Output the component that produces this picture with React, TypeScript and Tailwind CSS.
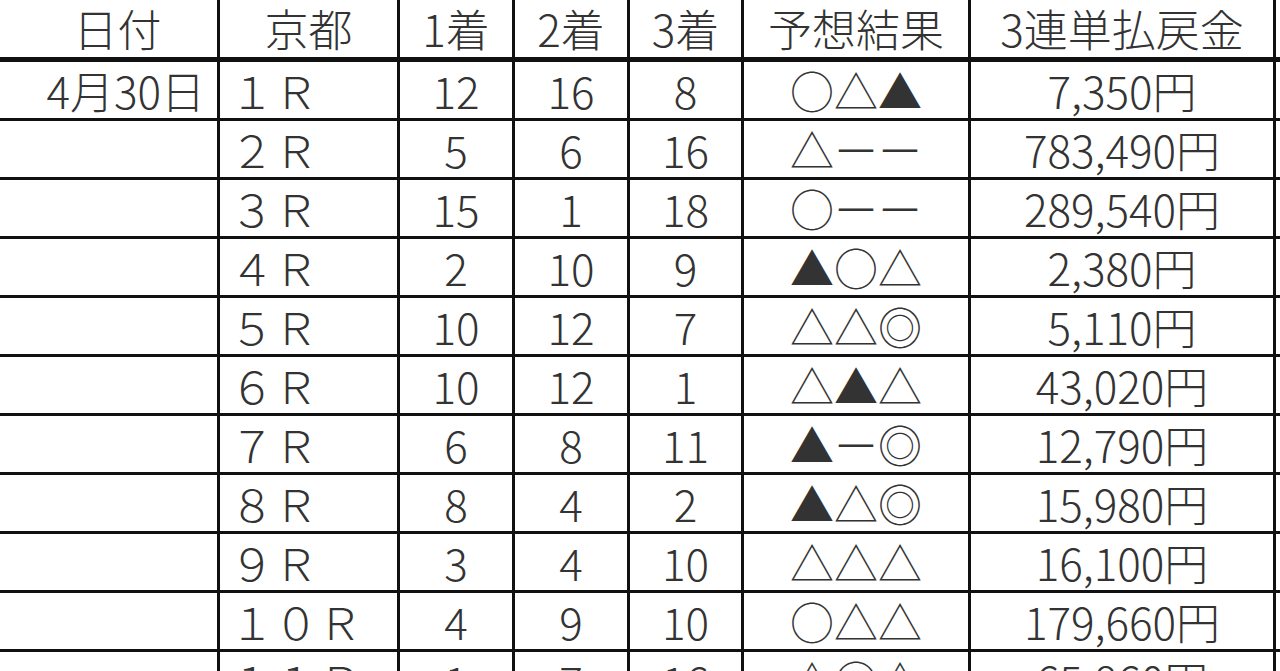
import React from "react";

interface Row {
  date: string;
  race: string;
  first: string;
  second: string;
  third: string;
  mark: string;
  payout: string;
}

const rows: Row[] = [
  { date: "4月30日", race: "１Ｒ", first: "12", second: "16", third: "8", mark: "○△▲", payout: "7,350円" },
  { date: "", race: "２Ｒ", first: "5", second: "6", third: "16", mark: "△ーー", payout: "783,490円" },
  { date: "", race: "３Ｒ", first: "15", second: "1", third: "18", mark: "○ーー", payout: "289,540円" },
  { date: "", race: "４Ｒ", first: "2", second: "10", third: "9", mark: "▲○△", payout: "2,380円" },
  { date: "", race: "５Ｒ", first: "10", second: "12", third: "7", mark: "△△◎", payout: "5,110円" },
  { date: "", race: "６Ｒ", first: "10", second: "12", third: "1", mark: "△▲△", payout: "43,020円" },
  { date: "", race: "７Ｒ", first: "6", second: "8", third: "11", mark: "▲ー◎", payout: "12,790円" },
  { date: "", race: "８Ｒ", first: "8", second: "4", third: "2", mark: "▲△◎", payout: "15,980円" },
  { date: "", race: "９Ｒ", first: "3", second: "4", third: "10", mark: "△△△", payout: "16,100円" },
  { date: "", race: "１０Ｒ", first: "4", second: "9", third: "10", mark: "○△△", payout: "179,660円" },
  { date: "", race: "１１Ｒ", first: "1", second: "7", third: "16", mark: "△○△", payout: "65,860円" },
];

const grid = "grid grid-cols-[220px_180px_115px_115px_114px_227px_305px]";
const cell = "flex items-center border-r-[3px] border-[#111] leading-tight";

const App: React.FC = () => {
  return (
    <div
      className="w-[1280px] h-[671px] overflow-hidden bg-white text-[#333] text-[44px] font-light"
      style={{ fontFamily: '"Noto Sans CJK JP", "Noto Sans", sans-serif' }}
    >
      {/* Header */}
      <div className={`${grid} h-[62px] border-b-[5px] border-[#111]`}>
        <div className={`${cell} justify-center pl-[18px]`}>日付</div>
        <div className={`${cell} justify-center`}>京都</div>
        <div className={`${cell} justify-center`}>1着</div>
        <div className={`${cell} justify-center`}>2着</div>
        <div className={`${cell} justify-center`}>3着</div>
        <div className={`${cell} justify-center`}>予想結果</div>
        <div className={`${cell} justify-center`}>3連単払戻金</div>
      </div>

      {/* Rows */}
      {rows.map((r) => (
        <div key={r.race} className={`${grid} h-[59px] border-b-[3px] border-[#111]`}>
          <div className={`${cell} justify-end pr-[12px]`}>{r.date}</div>
          <div className={`${cell} justify-start pl-[10px]`}>{r.race}</div>
          <div className={`${cell} justify-center`}>{r.first}</div>
          <div className={`${cell} justify-center`}>{r.second}</div>
          <div className={`${cell} justify-center`}>{r.third}</div>
          <div className={`${cell} justify-center`}>{r.mark}</div>
          <div className={`${cell} justify-center`}>{r.payout}</div>
        </div>
      ))}
    </div>
  );
};

export default App;
